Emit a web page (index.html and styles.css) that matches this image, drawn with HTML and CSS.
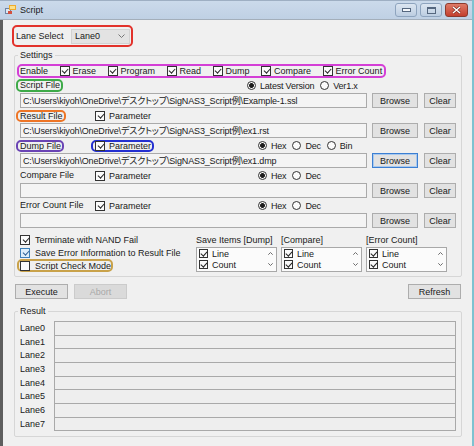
FILE: index.html
```html
<!DOCTYPE html>
<html lang="ja">
<head>
    <meta charset="UTF-8">
    <meta name="viewport" content="width=device-width, initial-scale=1.0">
    <title>Script</title>
    <link rel="stylesheet" href="styles.css">
</head>
<body>
<div class="window">
    <div class="titlebar">
        <svg class="app-icon" width="11" height="10" viewBox="0 0 11 10">
            <rect x="0" y="3" width="6" height="6" fill="#6f84a3"/>
            <rect x="1" y="4" width="4" height="4" fill="#dfe7f0"/>
            <rect x="4" y="0" width="7" height="5" fill="#eeab2c"/>
            <rect x="5" y="1" width="5" height="3" fill="#fbe08a"/>
            <rect x="3" y="6" width="4" height="3" fill="#d4503e"/>
        </svg>
        <span class="title">Script</span>
        <div class="caption">
            <span class="cap-btn cap-min">
                <svg width="9" height="4" viewBox="0 0 9 4"><rect x="0.5" y="0.5" width="8" height="3" fill="#f4f7fb" stroke="#55677f"/></svg>
            </span>
            <span class="cap-btn cap-max">
                <svg width="9" height="7" viewBox="0 0 9 7"><rect x="0.5" y="0.5" width="8" height="6" fill="none" stroke="#55677f"/><rect x="1" y="1" width="7" height="1" fill="#55677f"/></svg>
            </span>
            <span class="cap-btn cap-close">
                <svg width="9" height="8" viewBox="0 0 9 8"><path d="M1 1 L8 7 M8 1 L1 7" stroke="#7a2a20" stroke-width="2.6"/><path d="M1 1 L8 7 M8 1 L1 7" stroke="#fff" stroke-width="1.4"/></svg>
            </span>
        </div>
    </div>

    <div class="client">
        <div class="lane-select mark mark-red">
            <span>Lane Select</span>
            <div class="combo">
                <span>Lane0</span>
                <svg width="7" height="4" viewBox="0 0 7 4"><path d="M0.5 0.5 L3.5 3.5 L6.5 0.5" fill="none" stroke="#777"/></svg>
            </div>
        </div>

        <fieldset class="group settings">
            <legend>Settings</legend>

            <div class="enable-row">
                <div class="enable mark mark-magenta">
                    <span>Enable</span>
                    <label class="check"><input type="checkbox" checked>Erase</label>
                    <label class="check"><input type="checkbox" checked>Program</label>
                    <label class="check"><input type="checkbox" checked>Read</label>
                    <label class="check"><input type="checkbox" checked>Dump</label>
                    <label class="check"><input type="checkbox" checked>Compare</label>
                    <label class="check"><input type="checkbox" checked>Error Count</label>
                </div>
            </div>

            <div class="file-head">
                <span class="file-label mark mark-green">Script File</span>
                <span></span>
                <div class="radios shift">
                    <label class="radio"><input type="radio" name="ver" checked>Latest Version</label>
                    <label class="radio"><input type="radio" name="ver">Ver1.x</label>
                </div>
            </div>
            <div class="path-row">
                <input class="path" type="text" readonly value="C:\Users\kiyoh\OneDrive\デスクトップ\SigNAS3_Script例\Example-1.ssl">
                <button class="btn btn-browse">Browse</button>
                <button class="btn btn-clear">Clear</button>
            </div>

            <div class="file-head">
                <span class="file-label short mark mark-orange">Result File</span>
                <label class="check param"><input type="checkbox" checked>Parameter</label>
                <span></span>
            </div>
            <div class="path-row">
                <input class="path" type="text" readonly value="C:\Users\kiyoh\OneDrive\デスクトップ\SigNAS3_Script例\ex1.rst">
                <button class="btn btn-browse">Browse</button>
                <button class="btn btn-clear">Clear</button>
            </div>

            <div class="file-head">
                <span class="file-label short mark mark-purple">Dump File</span>
                <label class="check param mark mark-blue"><input type="checkbox" checked>Parameter</label>
                <div class="radios">
                    <label class="radio"><input type="radio" name="dump" checked>Hex</label>
                    <label class="radio"><input type="radio" name="dump">Dec</label>
                    <label class="radio"><input type="radio" name="dump">Bin</label>
                </div>
            </div>
            <div class="path-row">
                <input class="path" type="text" readonly value="C:\Users\kiyoh\OneDrive\デスクトップ\SigNAS3_Script例\ex1.dmp">
                <button class="btn btn-browse focus">Browse</button>
                <button class="btn btn-clear">Clear</button>
            </div>

            <div class="file-head">
                <span class="file-label">Compare File</span>
                <label class="check param"><input type="checkbox" checked>Parameter</label>
                <div class="radios">
                    <label class="radio"><input type="radio" name="cmp" checked>Hex</label>
                    <label class="radio"><input type="radio" name="cmp">Dec</label>
                </div>
            </div>
            <div class="path-row">
                <input class="path" type="text" readonly value="">
                <button class="btn btn-browse">Browse</button>
                <button class="btn btn-clear">Clear</button>
            </div>

            <div class="file-head">
                <span class="file-label">Error Count File</span>
                <label class="check param"><input type="checkbox" checked>Parameter</label>
                <div class="radios">
                    <label class="radio"><input type="radio" name="err" checked>Hex</label>
                    <label class="radio"><input type="radio" name="err">Dec</label>
                </div>
            </div>
            <div class="path-row">
                <input class="path" type="text" readonly value="">
                <button class="btn btn-browse">Browse</button>
                <button class="btn btn-clear">Clear</button>
            </div>

            <div class="options">
                <div class="opt-checks">
                    <div class="opt-row">
                        <label class="check opt"><input type="checkbox" checked>Terminate with NAND Fail</label>
                    </div>
                    <div class="opt-row">
                        <label class="check opt"><input class="hot" type="checkbox" checked>Save Error Information to Result File</label>
                    </div>
                    <div class="opt-row">
                        <label class="check opt mark mark-gold"><input type="checkbox">Script Check Mode</label>
                    </div>
                </div>

                <div class="save-items">
                    <div class="save-col">
                        <span class="save-title">Save Items [Dump]</span>
                        <div class="listbox">
                            <div class="list-items">
                                <label class="check small"><input type="checkbox" checked>Line</label>
                                <label class="check small"><input type="checkbox" checked>Count</label>
                            </div>
                            <div class="list-arrows">
                                <svg width="5" height="3" viewBox="0 0 5 3"><path d="M0.3 2.7 L2.5 0.5 L4.7 2.7" fill="none" stroke="#6d6d6d"/></svg>
                                <svg width="5" height="3" viewBox="0 0 5 3"><path d="M0.3 0.3 L2.5 2.5 L4.7 0.3" fill="none" stroke="#6d6d6d"/></svg>
                            </div>
                        </div>
                    </div>
                    <div class="save-col">
                        <span class="save-title">[Compare]</span>
                        <div class="listbox">
                            <div class="list-items">
                                <label class="check small"><input type="checkbox" checked>Line</label>
                                <label class="check small"><input type="checkbox" checked>Count</label>
                            </div>
                            <div class="list-arrows">
                                <svg width="5" height="3" viewBox="0 0 5 3"><path d="M0.3 2.7 L2.5 0.5 L4.7 2.7" fill="none" stroke="#6d6d6d"/></svg>
                                <svg width="5" height="3" viewBox="0 0 5 3"><path d="M0.3 0.3 L2.5 2.5 L4.7 0.3" fill="none" stroke="#6d6d6d"/></svg>
                            </div>
                        </div>
                    </div>
                    <div class="save-col">
                        <span class="save-title">[Error Count]</span>
                        <div class="listbox">
                            <div class="list-items">
                                <label class="check small"><input type="checkbox" checked>Line</label>
                                <label class="check small"><input type="checkbox" checked>Count</label>
                            </div>
                            <div class="list-arrows">
                                <svg width="5" height="3" viewBox="0 0 5 3"><path d="M0.3 2.7 L2.5 0.5 L4.7 2.7" fill="none" stroke="#6d6d6d"/></svg>
                                <svg width="5" height="3" viewBox="0 0 5 3"><path d="M0.3 0.3 L2.5 2.5 L4.7 0.3" fill="none" stroke="#6d6d6d"/></svg>
                            </div>
                        </div>
                    </div>
                </div>
            </div>
        </fieldset>

        <div class="actions">
            <button class="btn btn-wide">Execute</button>
            <button class="btn btn-wide btn-abort" disabled>Abort</button>
            <button class="btn btn-wide btn-refresh">Refresh</button>
        </div>

        <fieldset class="group result">
            <legend>Result</legend>
            <div class="lanes">
                <span class="lane-name">Lane0</span><div class="lane-bar"></div>
                <span class="lane-name">Lane1</span><div class="lane-bar"></div>
                <span class="lane-name">Lane2</span><div class="lane-bar"></div>
                <span class="lane-name">Lane3</span><div class="lane-bar"></div>
                <span class="lane-name">Lane4</span><div class="lane-bar"></div>
                <span class="lane-name">Lane5</span><div class="lane-bar"></div>
                <span class="lane-name">Lane6</span><div class="lane-bar"></div>
                <span class="lane-name">Lane7</span><div class="lane-bar"></div>
            </div>
        </fieldset>
    </div>
</div>
</body>
</html>
```

FILE: styles.css
```css
* {
    box-sizing: border-box;
}

body {
    margin: 0;
    width: 474px;
    height: 446px;
    overflow: hidden;
    font: 9px "Liberation Sans", "Noto Sans CJK JP", sans-serif;
    color: #202020;
    background: #f0f0f0;
}

.window {
    height: 446px;
    display: flex;
    flex-direction: column;
    border-right: 2px solid #7ec2d0;
}

/* title bar */

.titlebar {
    flex: none;
    height: 20px;
    display: flex;
    align-items: center;
    padding: 0 4px 0 5px;
    background: linear-gradient(#cbdaeb, #bfd0e4);
    border-top: 1px solid #9eafc3;
    border-bottom: 1px solid #a3aeba;
}

.title {
    margin-left: 4px;
}

.caption {
    margin-left: auto;
    display: flex;
    gap: 3px;
}

.cap-btn {
    height: 14px;
    display: flex;
    align-items: center;
    justify-content: center;
    border-radius: 3px;
    border: 1px solid #8ea4be;
    background: linear-gradient(#dce6f1, #bccde1);
}

.cap-min, .cap-max {
    width: 22px;
}

.cap-close {
    width: 23px;
    border-color: #8c3a2e;
    background: linear-gradient(#de7a68, #c43f2e);
}

/* client area */

.client {
    flex: 1;
    border-left: 3px solid #5e5e5e;
    padding: 7px 10px 0 11px;
}

.mark {
    border-radius: 3px;
    outline: 2px solid;
}

.mark-red { outline-color: #e2322b; }
.mark-magenta { outline-color: #d43fd6; }
.mark-green { outline-color: #3eaa48; }
.mark-orange { outline-color: #ee7526; }
.mark-purple { outline-color: #6a44b4; }
.mark-blue { outline-color: #2430d0; }
.mark-gold { outline-color: #c9a24a; }

.lane-select {
    width: 117px;
    height: 18px;
    display: flex;
    align-items: center;
    padding: 0 1px 0 2px;
}

.combo {
    margin-left: auto;
    width: 59px;
    height: 15px;
    display: flex;
    align-items: center;
    justify-content: space-between;
    padding: 0 4px 0 3px;
    background: #e3e3e3;
    border: 1px solid #d2d2d2;
}

.group {
    margin: 0;
    min-width: 0;
    border: 1px solid #d6d6d6;
    border-radius: 2px;
}

.group legend {
    padding: 0 2px;
    line-height: 10px;
}

.settings {
    margin-top: 5px;
    padding: 4px 5px 4px 3px;
}

/* checkboxes and radios */

.check, .radio {
    display: flex;
    align-items: center;
    gap: 3px;
    white-space: nowrap;
}

.check input {
    appearance: none;
    flex: none;
    position: relative;
    margin: 0;
    width: 10px;
    height: 10px;
    border: 1px solid #333;
    background: #fbfbfb;
}

.check input:checked::after {
    content: "";
    position: absolute;
    left: 2.5px;
    top: 0.3px;
    width: 2.6px;
    height: 5.4px;
    border: solid #222;
    border-width: 0 1.2px 1.2px 0;
    transform: rotate(42deg);
}

.check input.hot {
    border-color: #3d7fb8;
    background: #dceefb;
}

.check input.hot::after {
    border-color: #2b5f94;
}

.radio {
    gap: 4px;
    letter-spacing: -0.2px;
}

.radio input {
    appearance: none;
    flex: none;
    margin: 0;
    width: 9px;
    height: 9px;
    border: 1px solid #333;
    border-radius: 50%;
    background: #fbfbfb;
}

.radio input:checked {
    background: radial-gradient(circle, #1c1c1c 0 2.1px, #fbfbfb 2.7px);
}

/* settings rows */

.enable-row {
    height: 14px;
    display: flex;
    align-items: center;
}

.enable {
    height: 10px;
    display: flex;
    align-items: center;
    gap: 11.5px;
    margin-left: 1px;
    padding: 0 2px 0 1px;
}

.file-head {
    height: 15px;
    display: grid;
    grid-template-columns: 75px 165px auto;
    align-items: center;
}

.file-label {
    justify-self: start;
    height: 9px;
    line-height: 9px;
    padding: 0 1px 0 2px;
    white-space: nowrap;
}

.file-label.short {
    height: 8px;
    line-height: 8px;
}

.param {
    justify-self: start;
    height: 8px;
    gap: 4px;
    padding: 0 1px 0 2px;
}

.radios {
    display: flex;
    align-items: center;
    gap: 6px;
}

.radios.shift {
    margin-left: -11px;
}

.path-row {
    height: 15px;
    display: flex;
    margin-left: 2px;
}

.path {
    flex: 1;
    min-width: 0;
    height: 15px;
    margin: 0;
    padding: 0 2px;
    border: 1px solid #aaaaaa;
    background: #f4f4f4;
    font: inherit;
    color: #202020;
    letter-spacing: -0.15px;
    font-feature-settings: "palt";
    outline: none;
}

.btn {
    height: 15px;
    margin: 0;
    padding: 0;
    font: inherit;
    color: #202020;
    background: #e2e2e2;
    border: 1px solid #adadad;
}

.btn-browse {
    width: 46px;
    margin-left: 5px;
}

.btn-clear {
    width: 32px;
    margin-left: 6px;
}

.btn.focus {
    border-color: #3c7fd2;
    box-shadow: inset 0 0 0 1px #a9c9ee;
}

.options {
    display: flex;
    margin-top: 5px;
}

.opt-checks {
    width: 178px;
}

.opt-row {
    height: 13px;
    display: flex;
    align-items: center;
}

.opt {
    height: 9px;
    gap: 5px;
    margin-left: 1px;
    padding-left: 1px;
}

.save-items {
    display: grid;
    grid-template-columns: repeat(3, 81px);
    column-gap: 4px;
}

.save-title {
    height: 14px;
    display: flex;
    align-items: center;
    white-space: nowrap;
}

.listbox {
    height: 25px;
    display: flex;
    border: 1px solid #a8a8a8;
    background: #fbfbfb;
}

.list-items {
    flex: 1;
    padding-left: 2px;
}

.check.small {
    height: 11px;
    gap: 4px;
}

.check.small input {
    width: 9px;
    height: 9px;
}

.check.small input:checked::after {
    left: 2.2px;
    top: 0;
    height: 5px;
}

.list-arrows {
    width: 12px;
    display: grid;
    grid-template-rows: 11px 11px;
    justify-items: center;
    align-items: center;
}

/* buttons row */

.actions {
    display: flex;
    margin: 7px 1px 0;
}

.btn-wide {
    width: 53px;
}

.btn-abort {
    margin-left: 6px;
}

.btn:disabled {
    color: #a9a9a9;
    background: #dadada;
    border-color: #cbcbcb;
}

.btn-refresh {
    margin-left: auto;
}

/* result */

.result {
    margin-top: 7px;
    padding: 5px 5px 5px 3px;
}

.lanes {
    margin-left: 2px;
    display: grid;
    grid-template-columns: 34px 1fr;
    grid-template-rows: repeat(8, 13.7px);
}

.lane-name {
    display: flex;
    align-items: center;
}

.lane-bar {
    border: 1px solid #a9a9a9;
    border-bottom: 0;
    background: #eeeeee;
}

.lane-bar:last-child {
    border-bottom: 1px solid #a9a9a9;
}
```
